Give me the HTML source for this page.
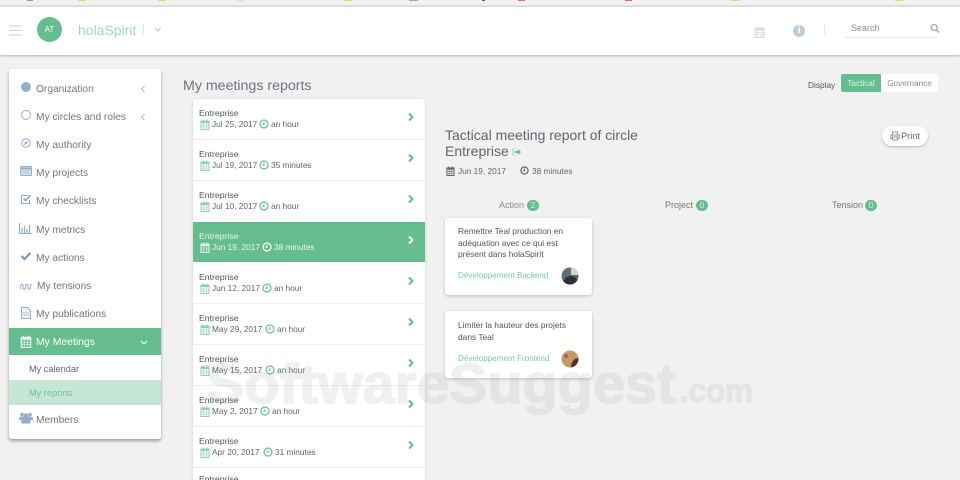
<!DOCTYPE html>
<html style="overflow:hidden;height:480px"><head><meta charset="utf-8"><style>
html,body{margin:0;padding:0}
body{width:960px;height:480px;overflow:hidden;background:#f1f1f1;font-family:"Liberation Sans",sans-serif;color:#555}
#w{position:absolute;left:0;top:0;width:960px;height:480px;overflow:hidden;background:#f1f1f1}
.a{position:absolute;white-space:nowrap}
.nav{position:absolute;left:36px;font-size:10.2px;color:#6f7683;line-height:14px;white-space:nowrap}
.ic{position:absolute}
.rt{position:absolute;left:199px;font-size:8.7px;color:#555;line-height:12px;white-space:nowrap}
.rd{position:absolute;left:212px;font-size:8.3px;color:#5f6670;line-height:12px;white-space:nowrap}
.card{position:absolute;left:445px;width:147px;background:#fff;border-radius:3px;box-shadow:0 1px 3px rgba(0,0,0,.22)}
.ct{position:absolute;left:458px;font-size:8.4px;line-height:11.5px;color:#555;white-space:nowrap}
.cg{position:absolute;left:458px;font-size:8.1px;color:#7ccaa0;white-space:nowrap;line-height:12px}
</style></head><body><div id="w">
<svg width="0" height="0" style="position:absolute"><defs>
<symbol id="cal" viewBox="0 0 10 11"><path d="M1 2h8v8.500H1z" fill="none" stroke="currentColor"/><path d="M1 2h8v2H1z" fill="currentColor"/><path d="M1 6h8M1 8h8M3.500 4v6M6.500 4v6" stroke="currentColor" stroke-width=".6"/><path d="M3 .5v2M7 .5v2" stroke="currentColor"/></symbol>
<symbol id="clk" viewBox="0 0 10 10"><circle cx="5" cy="5" r="4" fill="none" stroke="currentColor" stroke-width="1.200"/><path d="M5 2.800V5.300H3.200" fill="none" stroke="currentColor"/></symbol>
<symbol id="chv" viewBox="0 0 8 10"><path d="M2 1.500 5.500 5 2 8.500" fill="none" stroke="currentColor" stroke-width="2"/></symbol>
</defs></svg>

<!-- top strip -->
<div class="a" style="left:0;top:5px;width:960px;height:2px;background:#e0e0e0"></div>
<div class="a" style="left:27px;top:0;width:6px;height:1px;background:#8a94c8"></div>
<div class="a" style="left:78px;top:0;width:8px;height:1px;background:#f5cf6b"></div>
<div class="a" style="left:158px;top:0;width:8px;height:1px;background:#f5cf6b"></div>
<div class="a" style="left:237px;top:0;width:8px;height:1px;background:#e4dfc0"></div>
<div class="a" style="left:344px;top:0;width:8px;height:1px;background:#f5cf6b"></div>
<div class="a" style="left:409px;top:0;width:9px;height:1px;background:#82aeea"></div>
<div class="a" style="left:482px;top:0;width:3px;height:1px;background:#555"></div>
<div class="a" style="left:518px;top:0;width:7px;height:1px;background:#e06a70"></div>
<div class="a" style="left:625px;top:0;width:7px;height:1px;background:#e06a70"></div>
<div class="a" style="left:731px;top:0;width:9px;height:1px;background:#f5cf6b"></div>
<div class="a" style="left:895px;top:0;width:8px;height:1px;background:#f5cf6b"></div>

<!-- header -->
<div class="a" style="left:0;top:7px;width:960px;height:48px;background:#fff;box-shadow:0 1px 2px rgba(0,0,0,.28)"></div>
<svg class="ic" style="left:9px;top:25px" width="14" height="11"><path d="M0 1h13M0 5.500h13M0 10h13" stroke="#c3d3e0" stroke-width="1"/></svg>
<div class="a" style="left:37px;top:17px;width:25px;height:25px;border-radius:50%;background:#66bd8f;color:#fff;font-size:8px;line-height:25px;text-align:center">AT</div>
<div class="a" style="left:78px;top:21px;font-size:14px;line-height:18px;color:#9fd8bb">holaSpirit</div>
<div class="a" style="left:143px;top:24px;width:1px;height:11px;background:#e3e6ea"></div>
<svg class="ic" style="left:154px;top:27px" width="8" height="6"><path d="M1 1 3.800 4 6.600 1" fill="none" stroke="#b5c6d4"/></svg>
<svg class="ic" style="left:754px;top:26px;color:#cfdae3" width="11" height="12"><use href="#cal"/></svg>
<div class="a" style="left:793px;top:25px;width:12px;height:12px;border-radius:50%;background:#b9cddd;color:#fff;font:bold 10px/12px 'Liberation Serif',serif;text-align:center">i</div>
<div class="a" style="left:824px;top:23px;width:1px;height:12px;background:#e8ebee"></div>
<div class="a" style="left:851px;top:22px;font-size:9px;line-height:12px;color:#8b8f94">Search</div>
<svg class="ic" style="left:930px;top:23px" width="10" height="11"><circle cx="4.200" cy="4.500" r="3" fill="none" stroke="#a4a8ac" stroke-width="1.300"/><path d="M6.500 7 9 9.500" stroke="#a4a8ac" stroke-width="1.500"/></svg>
<div class="a" style="left:845px;top:37px;width:92px;height:1px;background:#e6e8ea"></div>

<!-- sidebar -->
<div class="a" style="left:9px;top:69px;width:152px;height:370px;background:#fff;border-radius:3px;box-shadow:0 2px 3px rgba(0,0,0,.35)"></div>
<div class="a" style="left:21px;top:82px;width:10px;height:10px;border-radius:50%;background:#95aec6"></div>
<div class="nav" style="top:83px">Organization</div>
<svg class="ic" style="left:140px;top:85px" width="6" height="8"><path d="M4.500 1 1.500 4 4.500 7" fill="none" stroke="#a9bccc"/></svg>
<div class="a" style="left:21px;top:110px;width:8px;height:8px;border-radius:50%;border:1px solid #95aec6"></div>
<div class="nav" style="top:111px">My circles and roles</div>
<svg class="ic" style="left:140px;top:113px" width="6" height="8"><path d="M4.500 1 1.500 4 4.500 7" fill="none" stroke="#a9bccc"/></svg>
<svg class="ic" style="left:21px;top:138px" width="10" height="10"><circle cx="5" cy="5" r="4.200" fill="none" stroke="#95aec6"/><path d="M7 3 4 4.200 3 7 6 5.800z" fill="#95aec6"/></svg>
<div class="nav" style="top:139px">My authority</div>
<svg class="ic" style="left:20px;top:166px" width="12" height="10"><rect x=".5" y=".5" width="11" height="9" rx="1" fill="#dfe7ee" stroke="#95aec6"/><path d="M.5 2.500h11" stroke="#95aec6" stroke-width="2"/><path d="M2 5h8M2 7h8" stroke="#95aec6" stroke-width=".8"/></svg>
<div class="nav" style="top:167px">My projects</div>
<svg class="ic" style="left:20px;top:194px" width="12" height="11"><path d="M9.500 6v3.500h-8v-8h7" fill="none" stroke="#95aec6"/><path d="M3.500 4.500 5.500 6.500 10.500 1.500" fill="none" stroke="#95aec6" stroke-width="1.700"/></svg>
<div class="nav" style="top:195px">My checklists</div>
<svg class="ic" style="left:19px;top:223px" width="14" height="11"><path d="M.5 0v10.500H13" fill="none" stroke="#95aec6"/><path d="M3 5v5M5.500 3v7M8 6v4M10.500 2v8" stroke="#95aec6" stroke-width="1.300"/></svg>
<div class="nav" style="top:224px">My metrics</div>
<svg class="ic" style="left:20px;top:251px" width="12" height="10"><path d="M1.500 5 4.500 8 10.500 1.800" fill="none" stroke="#7f9cb8" stroke-width="2.300"/></svg>
<div class="nav" style="top:252px">My actions</div>
<svg class="ic" style="left:20px;top:283px" width="13" height="7"><path d="M.7 6V2.500a1.200 1.200 0 0 1 2.400 0V5a1.200 1.200 0 0 0 2.400 0V2.500a1.200 1.200 0 0 1 2.400 0V5a1.200 1.200 0 0 0 2.400 0V2.500a1.200 1.200 0 0 1 1.800-1" fill="none" stroke="#95aec6"/></svg>
<div class="nav" style="top:280px;left:37px">My tensions</div>
<svg class="ic" style="left:21px;top:307px" width="10" height="12"><path d="M.5.5h6l3 3v8h-9z" fill="#f0f4f7" stroke="#95aec6"/><path d="M2 6h6M2 8h6" stroke="#95aec6" stroke-width=".8"/></svg>
<div class="nav" style="top:308px">My publications</div>
<div class="a" style="left:9px;top:328px;width:152px;height:27px;background:#66bd8f"></div>
<svg class="ic" style="left:20px;top:335px;color:#eaf6ef" width="12" height="13"><use href="#cal"/></svg>
<div class="nav" style="top:336px;color:#fff;font-size:10.4px">My Meetings</div>
<svg class="ic" style="left:140px;top:340px" width="8" height="6"><path d="M1 1 4 4 7 1" fill="none" stroke="#fff"/></svg>
<div class="nav" style="left:29px;top:362px;font-size:9.200px;color:#5f6670">My calendar</div>
<div class="a" style="left:9px;top:380px;width:152px;height:25px;background:#c6e7d5"></div>
<div class="nav" style="left:29px;top:386px;font-size:9.200px;color:#72c096">My reports</div>
<svg class="ic" style="left:19px;top:412px" width="14" height="12"><circle cx="3" cy="2.500" r="1.800" fill="#95aec6"/><circle cx="11" cy="2.500" r="1.800" fill="#95aec6"/><circle cx="7" cy="3.500" r="2.300" fill="#95aec6"/><path d="M0 8c0-3 1-3.500 3-3.500h8c2 0 3 .5 3 3.500h-2.500v3.500h-9V8z" fill="#95aec6"/></svg>
<div class="nav" style="top:414px">Members</div>

<!-- page title -->
<div class="a" style="left:183px;top:77px;font-size:14.200px;line-height:18px;color:#6c7480">My meetings reports</div>

<!-- list -->
<div class="a" style="left:193px;top:99px;width:232px;height:381px;background:#fff;border-radius:3px 3px 0 0;box-shadow:0 1px 3px rgba(0,0,0,.14)"></div>
<div class="a" style="left:193px;top:139px;width:232px;height:1px;background:#efefef"></div>
<div class="a" style="left:193px;top:180px;width:232px;height:1px;background:#efefef"></div>
<div class="a" style="left:193px;top:303px;width:232px;height:1px;background:#efefef"></div>
<div class="a" style="left:193px;top:344px;width:232px;height:1px;background:#efefef"></div>
<div class="a" style="left:193px;top:385px;width:232px;height:1px;background:#efefef"></div>
<div class="a" style="left:193px;top:426px;width:232px;height:1px;background:#efefef"></div>
<div class="a" style="left:193px;top:467px;width:232px;height:1px;background:#efefef"></div>
<div class="a" style="left:193px;top:222px;width:232px;height:40px;background:#66bd8f"></div>

<div class="rt" style="top:107px">Entreprise</div>
<svg class="ic" style="left:200px;top:119px;color:#8fd0ad" width="10" height="11"><use href="#cal"/></svg>
<div class="rd" style="top:118px">Jul 25, 2017</div>
<svg class="ic" style="left:259px;top:119px;color:#66bd8f" width="10" height="10"><use href="#clk"/></svg>
<div class="rd" style="top:118px;left:271px">an hour</div>
<svg class="ic" style="left:407px;top:112px;color:#66bd8f" width="8" height="10"><use href="#chv"/></svg>

<div class="rt" style="top:148px">Entreprise</div>
<svg class="ic" style="left:200px;top:160px;color:#8fd0ad" width="10" height="11"><use href="#cal"/></svg>
<div class="rd" style="top:159px">Jul 19, 2017</div>
<svg class="ic" style="left:259px;top:160px;color:#66bd8f" width="10" height="10"><use href="#clk"/></svg>
<div class="rd" style="top:159px;left:271px">35 minutes</div>
<svg class="ic" style="left:407px;top:153px;color:#66bd8f" width="8" height="10"><use href="#chv"/></svg>

<div class="rt" style="top:189px">Entreprise</div>
<svg class="ic" style="left:200px;top:201px;color:#8fd0ad" width="10" height="11"><use href="#cal"/></svg>
<div class="rd" style="top:200px">Jul 10, 2017</div>
<svg class="ic" style="left:259px;top:201px;color:#66bd8f" width="10" height="10"><use href="#clk"/></svg>
<div class="rd" style="top:200px;left:271px">an hour</div>
<svg class="ic" style="left:407px;top:194px;color:#66bd8f" width="8" height="10"><use href="#chv"/></svg>

<div class="rt" style="top:230px;color:#e6f5ec">Entreprise</div>
<svg class="ic" style="left:200px;top:242px;color:#e6f5ec" width="10" height="11"><use href="#cal"/></svg>
<div class="rd" style="top:241px;color:#eef8f2">Jun 19, 2017</div>
<svg class="ic" style="left:262px;top:242px;color:#fff" width="10" height="10"><use href="#clk"/></svg>
<div class="rd" style="top:241px;left:274px;color:#eef8f2">38 minutes</div>
<svg class="ic" style="left:407px;top:235px;color:#fff" width="8" height="10"><use href="#chv"/></svg>

<div class="rt" style="top:271px">Entreprise</div>
<svg class="ic" style="left:200px;top:283px;color:#8fd0ad" width="10" height="11"><use href="#cal"/></svg>
<div class="rd" style="top:282px">Jun 12, 2017</div>
<svg class="ic" style="left:262px;top:283px;color:#66bd8f" width="10" height="10"><use href="#clk"/></svg>
<div class="rd" style="top:282px;left:274px">an hour</div>
<svg class="ic" style="left:407px;top:276px;color:#66bd8f" width="8" height="10"><use href="#chv"/></svg>

<div class="rt" style="top:312px">Entreprise</div>
<svg class="ic" style="left:200px;top:324px;color:#8fd0ad" width="10" height="11"><use href="#cal"/></svg>
<div class="rd" style="top:323px">May 29, 2017</div>
<svg class="ic" style="left:265px;top:324px;color:#66bd8f" width="10" height="10"><use href="#clk"/></svg>
<div class="rd" style="top:323px;left:277px">an hour</div>
<svg class="ic" style="left:407px;top:317px;color:#66bd8f" width="8" height="10"><use href="#chv"/></svg>

<div class="rt" style="top:353px">Entreprise</div>
<svg class="ic" style="left:200px;top:365px;color:#8fd0ad" width="10" height="11"><use href="#cal"/></svg>
<div class="rd" style="top:364px">May 15, 2017</div>
<svg class="ic" style="left:265px;top:365px;color:#66bd8f" width="10" height="10"><use href="#clk"/></svg>
<div class="rd" style="top:364px;left:277px">an hour</div>
<svg class="ic" style="left:407px;top:358px;color:#66bd8f" width="8" height="10"><use href="#chv"/></svg>

<div class="rt" style="top:394px">Entreprise</div>
<svg class="ic" style="left:200px;top:406px;color:#8fd0ad" width="10" height="11"><use href="#cal"/></svg>
<div class="rd" style="top:405px">May 2, 2017</div>
<svg class="ic" style="left:260px;top:406px;color:#66bd8f" width="10" height="10"><use href="#clk"/></svg>
<div class="rd" style="top:405px;left:272px">an hour</div>
<svg class="ic" style="left:407px;top:399px;color:#66bd8f" width="8" height="10"><use href="#chv"/></svg>

<div class="rt" style="top:435px">Entreprise</div>
<svg class="ic" style="left:200px;top:447px;color:#8fd0ad" width="10" height="11"><use href="#cal"/></svg>
<div class="rd" style="top:446px">Apr 20, 2017</div>
<svg class="ic" style="left:263px;top:447px;color:#66bd8f" width="10" height="10"><use href="#clk"/></svg>
<div class="rd" style="top:446px;left:275px">31 minutes</div>
<svg class="ic" style="left:407px;top:440px;color:#66bd8f" width="8" height="10"><use href="#chv"/></svg>

<div class="rt" style="top:473px">Entreprise</div>

<!-- display toggle -->
<div class="a" style="left:808px;top:79px;font-size:8.300px;line-height:12px;color:#555">Display</div>
<div class="a" style="left:841px;top:74px;width:40px;height:18px;background:#66bd8f;border-radius:2px 0 0 2px;color:#e2f4ea;font-size:8.200px;line-height:19px;text-align:center">Tactical</div>
<div class="a" style="left:881px;top:74px;width:57px;height:18px;background:#fff;border-radius:0 2px 2px 0;color:#8a8f94;font-size:8.200px;line-height:19px;text-align:center">Governance</div>

<!-- report header -->
<div class="a" style="left:445px;top:128px;font-size:14px;line-height:15.500px;color:#5f6670">Tactical meeting report of circle<br>Entreprise</div>
<svg class="ic" style="left:512px;top:148px" width="9" height="8"><path d="M3.500 1H.8v6h2.700" fill="none" stroke="#a5dcbd"/><path d="M3 3h3V1l3 3-3 3V5H3z" fill="#66bd8f"/></svg>
<svg class="ic" style="left:446px;top:166px;color:#666" width="9" height="10"><use href="#cal"/></svg>
<div class="a" style="left:458px;top:165px;font-size:8.300px;line-height:12px;color:#5f6670">Jun 19, 2017</div>
<svg class="ic" style="left:520px;top:166px;color:#555" width="9" height="9"><use href="#clk"/></svg>
<div class="a" style="left:532px;top:165px;font-size:8.300px;line-height:12px;color:#5f6670">38 minutes</div>
<div class="a" style="left:882px;top:126px;width:46px;height:20px;background:#fff;border-radius:10px;box-shadow:0 1px 2px rgba(0,0,0,.25)"></div>
<svg class="ic" style="left:890px;top:131px" width="10" height="10"><path d="M2.500 4V1h5v3M2.500 7.500H.8V4h8.400v3.500H7.500M2.500 6h5v3h-5z" fill="none" stroke="#8d96a0"/></svg>
<div class="a" style="left:901px;top:130px;font-size:9.200px;line-height:12px;color:#5f6670">Print</div>

<!-- columns -->
<div class="a" style="left:499px;top:199px;font-size:9px;line-height:12px;color:#8a8f94">Action</div>
<div class="a" style="left:527px;top:200px;width:12px;height:11px;border-radius:6px;background:#66bd8f;color:#d8f0e3;font-size:8px;line-height:11px;text-align:center">2</div>
<div class="a" style="left:665px;top:199px;font-size:9px;line-height:12px;color:#777">Project</div>
<div class="a" style="left:696px;top:200px;width:12px;height:11px;border-radius:6px;background:#66bd8f;color:#d8f0e3;font-size:8px;line-height:11px;text-align:center">0</div>
<div class="a" style="left:832px;top:199px;font-size:9px;line-height:12px;color:#777">Tension</div>
<div class="a" style="left:865px;top:200px;width:12px;height:11px;border-radius:6px;background:#66bd8f;color:#d8f0e3;font-size:8px;line-height:11px;text-align:center">0</div>

<!-- cards -->
<div class="card" style="top:218px;height:77px"></div>
<div class="ct" style="top:226px">Remettre Teal production en<br>adéquation avec ce qui est<br>présent dans holaSpirit</div>
<div class="cg" style="top:270px">Développement Backend</div>
<svg class="ic" style="left:561px;top:267px" width="18" height="18"><defs><clipPath id="c1"><circle cx="9" cy="9" r="8.500"/></clipPath></defs><g clip-path="url(#c1)"><rect width="18" height="18" fill="#5d6f7c"/><rect x="10" width="8" height="8" fill="#d9d4b8"/><path d="M2 18C2 11 7 8 11 9s6 4 7 9z" fill="#2d2f3a"/></g></svg>
<div class="card" style="top:311px;height:67px"></div>
<div class="ct" style="top:320px">Limiter la hauteur des projets<br>dans Teal</div>
<div class="cg" style="top:353px">Développement Frontend</div>
<svg class="ic" style="left:561px;top:350px" width="18" height="18"><defs><clipPath id="c2"><circle cx="9" cy="9" r="8.500"/></clipPath></defs><g clip-path="url(#c2)"><rect width="18" height="18" fill="#c79a63"/><path d="M10 18C10 12 13 8 18 8v10z" fill="#4a3438"/><circle cx="5" cy="6" r="2" fill="#b5603f"/></g></svg>

<!-- watermark -->
<svg class="ic" style="left:0;top:0;pointer-events:none" width="960" height="480"><g opacity=".1" fill="#777" stroke="#777" stroke-width="1.500" font-family="Liberation Sans" font-weight="bold"><text x="206" y="403" font-size="56" textLength="470" lengthAdjust="spacingAndGlyphs">SoftwareSuggest</text><text x="680" y="402" font-size="33" textLength="73" lengthAdjust="spacingAndGlyphs">.com</text></g></svg>
</div></body></html>
